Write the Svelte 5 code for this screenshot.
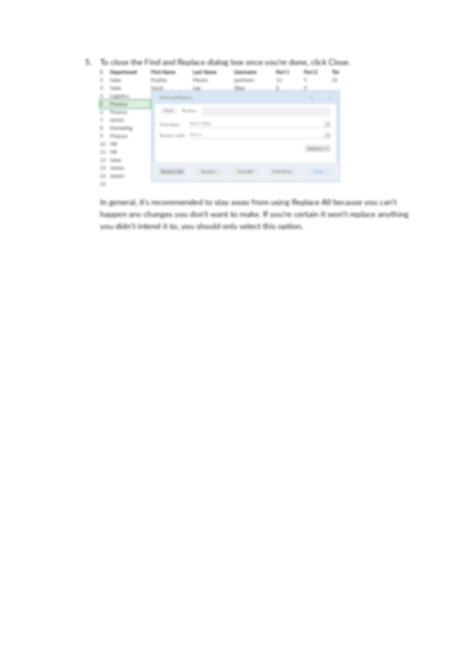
<script>
  const rows = [
    ['1','Department','First Name','Last Name','Username','Part 1','Part 2','Tot'],
    ['2','Sales','Pauline','Moore','paulinem','12','9','21'],
    ['3','Sales','Sarah','Lee','Sflee','8','9',''],
    ['4','Logistics','','','','','',''],
    ['5','Finance','','','','','',''],
    ['6','Finance','','','','','',''],
    ['7','Admin','','','','','',''],
    ['8','Marketing','','','','','',''],
    ['9','Finance','','','','','',''],
    ['10','HR','','','','','',''],
    ['11','HR','','','','','',''],
    ['12','Sales','','','','','',''],
    ['13','Admin','','','','','',''],
    ['14','Admin','','','','','',''],
    ['15','','','','','','','']
  ];
</script>

<main class="page">
  <div class="blur">
    <p class="step"><span class="num">5.</span><span>To close the Find and Replace dialog box once you're done, click Close.</span></p>

    <div class="shot">
      <div class="table">
        {#each rows as r, i}
          <div class="row" class:head={i === 0} class:sel={i === 4}>
            {#each r as c, j}
              <span class="cell c{j}">{c}</span>
            {/each}
          </div>
        {/each}
      </div>
      <div class="sel-line"></div>

      <div class="dialog">
        <div class="title"><span>Find and Replace</span><span class="ctrls"><span>?</span><span>×</span></span></div>
        <div class="inner">
          <div class="tabs"><span class="tab">Find</span><span class="tab on">Replace</span><span class="rule"></span></div>
          <div class="field"><span class="lbl">Find what:</span><span class="val">Part 1 (Pts)</span><span class="arrow">▾</span></div>
          <div class="field"><span class="lbl">Replace with:</span><span class="val">Part 1</span><span class="arrow">▾</span></div>
          <div class="opts"><span class="btn">Options &gt;&gt;</span></div>
        </div>
        <div class="foot">
          <span class="btn wide">Replace All</span>
          <span class="btn">Replace</span>
          <span class="btn">Find All</span>
          <span class="btn">Find Next</span>
          <span class="btn close">Close</span>
        </div>
      </div>
    </div>

    <p class="para">In general, it's recommended to stay away from using Replace All because you can't<br />happen any changes you don't want to make. If you're certain it won't replace anything<br />you didn't intend it to, you should only select this option.</p>
  </div>
</main>

<style>
  :global(body) { margin: 0; background: #fff; }
  .page { width: 474px; height: 670px; overflow: hidden; font-family: Lato, "Liberation Sans", sans-serif; color: #222; }
  .blur { filter: blur(1.2px); padding: 57px 0 0 85px; }
  .step { display: flex; margin: 0; font-size: 8.15px; line-height: 10px; white-space: nowrap; }
  .num { width: 15px; }
  .shot { position: relative; margin: 1px 0 0 15px; width: 245px; height: 123px; }
  .row { display: grid; grid-template-columns: 10px 41px 42px 41px 42px 28px 28px 13px; height: 8px; font-size: 5px; line-height: 8px; color: #555; white-space: nowrap; }
  .row.head { color: #222; font-weight: 700; }
  .row.sel { background: #dcefe0; outline: 1px solid #8cc49a; width: 50px; height: 8px; }
  .cell { overflow: hidden; }
  .sel-line { position: absolute; left: 50px; top: 36px; width: 6px; height: 1px; background: #8fc79b; }
  .dialog { position: absolute; left: 51px; top: 22px; width: 189px; height: 92px; box-sizing: border-box; padding: 0 3px; background: #d8e6f1; border: 1px solid #c6d9e8; display: flex; flex-direction: column; font-size: 4.4px; color: #666; }
  .title { display: flex; justify-content: space-between; height: 13px; line-height: 13px; padding: 0 5px; }
  .ctrls { display: flex; gap: 16px; }
  .inner { flex: 1; background: #fff; padding: 2px 5px 0; display: flex; flex-direction: column; }
  .tabs { display: flex; align-items: center; gap: 4px; height: 10px; }
  .tab { width: 17px; text-align: center; line-height: 8px; background: #f4f4f4; }
  .tab.on { background: #fff; }
  .rule { flex: 1; height: 9px; background: #f1f1f1; }
  .field { display: flex; align-items: center; height: 8px; margin-top: 4px; }
  .field + .field { margin-top: 3px; }
  .lbl { width: 30px; }
  .val { flex: 1; height: 7px; line-height: 7px; border-bottom: 1px solid #e4e4e4; color: #777; }
  .arrow { width: 7px; height: 7px; line-height: 7px; text-align: center; background: #eaeaea; }
  .opts { display: flex; justify-content: flex-end; margin-top: 6px; }
  .btn { display: block; height: 7px; line-height: 7px; background: #e2e2e2; color: #666; text-align: center; }
  .opts .btn { width: 26px; }
  .foot { display: flex; justify-content: space-between; align-items: center; height: 19px; padding: 0 7px; background: #eaf0f5; margin: 0 -3px; }
  .foot .btn { width: 26px; background: #e6e8ea; }
  .foot .wide { background: #d5dade; }
  .foot .close { background: #deecf8; color: #88a6c0; }
  .para { margin: 6px 0 0 15px; font-size: 8.2px; line-height: 11.8px; white-space: nowrap; color: #222; }
</style>
